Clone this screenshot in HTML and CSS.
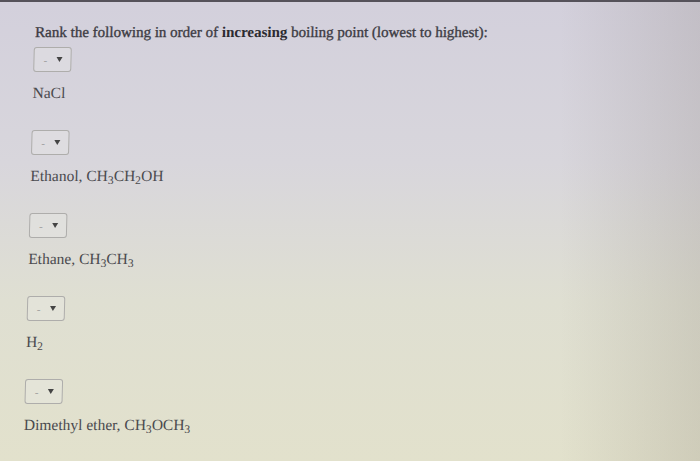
FILE: index.html
```html
<!DOCTYPE html>
<html lang="en">
<head>
    <meta charset="UTF-8">
    <title>Boiling point ranking</title>
    <link rel="stylesheet" href="styles.css">
</head>
<body>
    <div class="screen">
        <div class="question">
            <p class="prompt">Rank the following in order of <strong>increasing</strong> boiling point (lowest to highest):</p>

            <div class="item">
                <div class="pick"><span class="dash">-</span><span class="arrow"></span></div>
                <p class="label">NaCl</p>
            </div>

            <div class="item">
                <div class="pick"><span class="dash">-</span><span class="arrow"></span></div>
                <p class="label">Ethanol, CH<sub>3</sub>CH<sub>2</sub>OH</p>
            </div>

            <div class="item">
                <div class="pick"><span class="dash">-</span><span class="arrow"></span></div>
                <p class="label">Ethane, CH<sub>3</sub>CH<sub>3</sub></p>
            </div>

            <div class="item">
                <div class="pick"><span class="dash">-</span><span class="arrow"></span></div>
                <p class="label">H<sub>2</sub></p>
            </div>

            <div class="item">
                <div class="pick"><span class="dash">-</span><span class="arrow"></span></div>
                <p class="label">Dimethyl ether, CH<sub>3</sub>OCH<sub>3</sub></p>
            </div>
        </div>
    </div>
</body>
</html>
```

FILE: styles.css
```css
html, body {
    margin: 0;
    padding: 0;
    height: 100%;
}
body {
    font-family: "Liberation Serif", "DejaVu Serif", serif;
    color: #4a4a4e;
    overflow: hidden;
}
.screen {
    height: 461px;
    border-top: 2px solid #55525a;
    box-sizing: border-box;
    background:
        linear-gradient(to right, rgba(120, 110, 100, 0) 80%, rgba(120, 110, 100, 0.18) 100%),
        linear-gradient(to bottom, #d3d0dc 0%, #d8d6dc 35%, #dfdfd2 65%, #e2e1cc 100%);
}
.question {
    padding: 22px 0 0 36px;
    transform: skewX(-1.5deg);
    transform-origin: top left;
}
.prompt {
    margin: 0 0 6px;
    font-size: 15px;
    color: #3d3c44;
    -webkit-text-stroke: 0.35px #3d3c44;
}
.prompt strong {
    color: #2c2b31;
    -webkit-text-stroke: 0;
}
.item {
    margin-bottom: 28px;
}
.pick {
    width: 38px;
    height: 25px;
    border: 1px solid #aeadab;
    border-radius: 3px;
    background: rgba(235, 235, 232, 0.35);
    display: flex;
    align-items: center;
    justify-content: space-between;
    padding: 0 8px 0 9px;
    box-sizing: border-box;
    margin-left: -1px;
}
.dash {
    font-size: 11px;
    color: #9a9a9a;
}
.arrow {
    width: 0;
    height: 0;
    border-left: 3px solid transparent;
    border-right: 3px solid transparent;
    border-top: 5px solid #444;
}
.label {
    margin: 12px 0 0 -1px;
    font-size: 15.5px;
    line-height: 18px;
}
sub {
    font-size: 75%;
    vertical-align: -3px;
    line-height: 0;
}
```
